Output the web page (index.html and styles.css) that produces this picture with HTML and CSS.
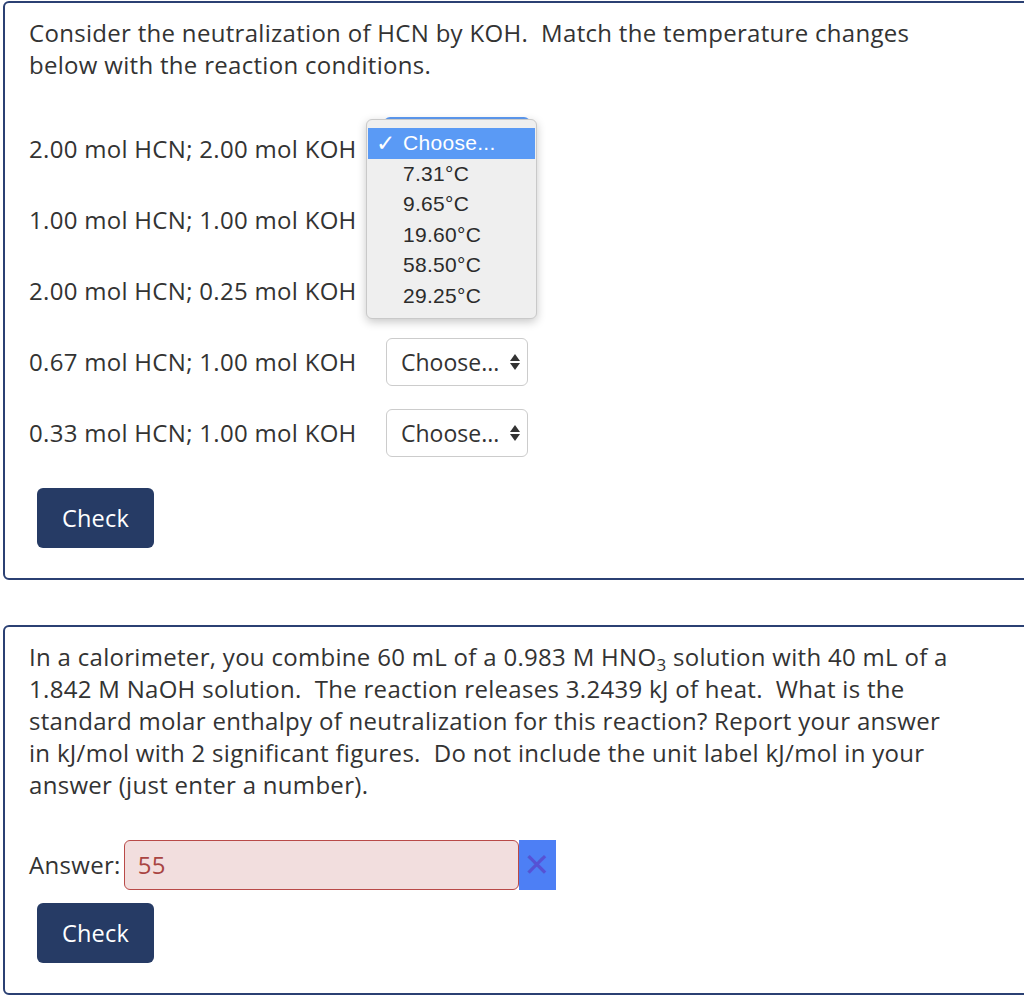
FILE: index.html
```html
<!DOCTYPE html>
<html>
<head>
<meta charset="utf-8">
<link rel="stylesheet" href="styles.css">
</head>
<body>
<div class="page">
  <div class="qbox">
    <p class="qtext">Consider the neutralization of HCN by KOH.&nbsp; Match the temperature changes below with the reaction conditions.</p>
    <div class="matches">
      <div class="label">2.00 mol HCN; 2.00 mol KOH</div>
      <div class="cell">
        <div class="sel sel-focus"></div>
        <div class="popup">
          <div class="opt active"><span class="tick">✓</span>Choose...</div>
          <div class="opt">7.31°C</div>
          <div class="opt">9.65°C</div>
          <div class="opt">19.60°C</div>
          <div class="opt">58.50°C</div>
          <div class="opt">29.25°C</div>
        </div>
      </div>
      <div class="label">1.00 mol HCN; 1.00 mol KOH</div>
      <div class="cell"></div>
      <div class="label">2.00 mol HCN; 0.25 mol KOH</div>
      <div class="cell"></div>
      <div class="label">0.67 mol HCN; 1.00 mol KOH</div>
      <div class="cell"><div class="sel">Choose...<span class="arrows"><span class="up"></span><span class="down"></span></span></div></div>
      <div class="label">0.33 mol HCN; 1.00 mol KOH</div>
      <div class="cell"><div class="sel">Choose...<span class="arrows"><span class="up"></span><span class="down"></span></span></div></div>
    </div>
    <button class="check">Check</button>
  </div>

  <div class="qbox second">
    <p class="qtext">In a calorimeter, you combine 60 mL of a 0.983 M HNO<sub>3</sub> solution with 40 mL of a 1.842 M NaOH solution.&nbsp; The reaction releases 3.2439 kJ of heat.&nbsp; What is the standard molar enthalpy of neutralization for this reaction? Report your answer in kJ/mol with 2 significant figures.&nbsp; Do not include the unit label kJ/mol in your answer (just enter a number).</p>
    <div class="answer-row">
      <span class="alabel">Answer:</span>
      <div class="ainput">55</div>
      <div class="mark">✕</div>
    </div>
    <button class="check check2">Check</button>
  </div>
</div>
</body>
</html>
```

FILE: styles.css
```css
html, body {
  margin: 0;
  padding: 0;
  overflow: hidden;
  background: #ffffff;
}
.page {
  padding: 1px 0 0 3px;
  width: 1060px;
  font-family: "Open Sans", "DejaVu Sans", sans-serif;
  color: #333333;
  font-size: 24px;
  letter-spacing: 0.3px;
  line-height: 32px;
}
.qbox {
  border: 2px solid #2b4073;
  border-radius: 6px;
  padding: 14px 24px 30px 24px;
  width: 1000px;
}
.second {
  margin-top: 45px;
}
.qtext {
  margin: 0;
  width: 920px;
}
.qtext sub {
  font-size: 17px;
  line-height: 0;
  vertical-align: -5px;
}
.matches {
  margin-top: 44px;
  display: grid;
  grid-template-columns: 327px 142px;
  grid-auto-rows: 48px;
  row-gap: 23px;
  column-gap: 30px;
  align-items: center;
  width: max-content;
}
.label {
  white-space: nowrap;
}
.cell {
  position: relative;
  height: 48px;
}
.sel {
  box-sizing: border-box;
  height: 48px;
  width: 142px;
  border: 1px solid #cccccc;
  border-radius: 6px;
  padding: 0 0 0 14px;
  display: flex;
  align-items: center;
  background: #ffffff;
  position: relative;
  font-size: 23px;
  letter-spacing: 0;
}
.arrows {
  position: absolute;
  right: 7px;
  top: 15px;
  display: flex;
  flex-direction: column;
  gap: 2px;
}
.up {
  width: 0; height: 0;
  border-left: 5px solid transparent;
  border-right: 5px solid transparent;
  border-bottom: 7px solid #333333;
}
.down {
  width: 0; height: 0;
  border-left: 5px solid transparent;
  border-right: 5px solid transparent;
  border-top: 7px solid #333333;
}
.sel-focus {
  position: absolute;
  top: -8px;
  left: -2px;
  height: 40px;
  width: 146px;
  background: #5e9bf3;
  border: none;
}
.popup {
  position: absolute;
  top: -6px;
  left: -20px;
  width: 171px;
  height: 200px;
  box-sizing: border-box;
  background: #efefef;
  border: 1px solid #c9c9c9;
  border-radius: 6px;
  box-shadow: 0 3px 10px rgba(0, 0, 0, 0.22);
  padding: 8px 1px;
  font-family: "Liberation Sans", Arial, sans-serif;
  font-size: 21px;
  letter-spacing: 0.3px;
  color: #2b2b2b;
}
.opt {
  height: 30.5px;
  line-height: 30.5px;
  padding-left: 35px;
  position: relative;
}
.opt.active {
  background: #5a9af5;
  color: #ffffff;
}
.tick {
  position: absolute;
  left: 8px;
  font-family: "DejaVu Sans", sans-serif;
  font-size: 23px;
  font-weight: bold;
}
.check {
  margin-top: 31px;
  display: block;
  width: 117px;
  height: 60px;
  border: none;
  border-radius: 6px;
  background: #263b65;
  color: #ffffff;
  font-family: "Open Sans", "DejaVu Sans", sans-serif;
  font-size: 23.5px;
  letter-spacing: 0.2px;
  padding: 0;
  margin-left: 8px;
}
.answer-row {
  margin-top: 39px;
  display: flex;
  align-items: center;
  height: 50px;
}
.alabel {
  margin-right: 3px;
}
.ainput {
  box-sizing: border-box;
  width: 395px;
  height: 50px;
  border: 1px solid #b94a48;
  border-radius: 6px;
  background: #f2dede;
  color: #a94442;
  padding-left: 13px;
  display: flex;
  align-items: center;
}
.mark {
  width: 37px;
  height: 50px;
  background: #4d7ff5;
  color: #5652d4;
  font-family: "DejaVu Sans", sans-serif;
  font-size: 32px;
  font-weight: bold;
  display: flex;
  align-items: center;
  justify-content: center;
}
.check2 {
  margin-top: 13px;
}
```
